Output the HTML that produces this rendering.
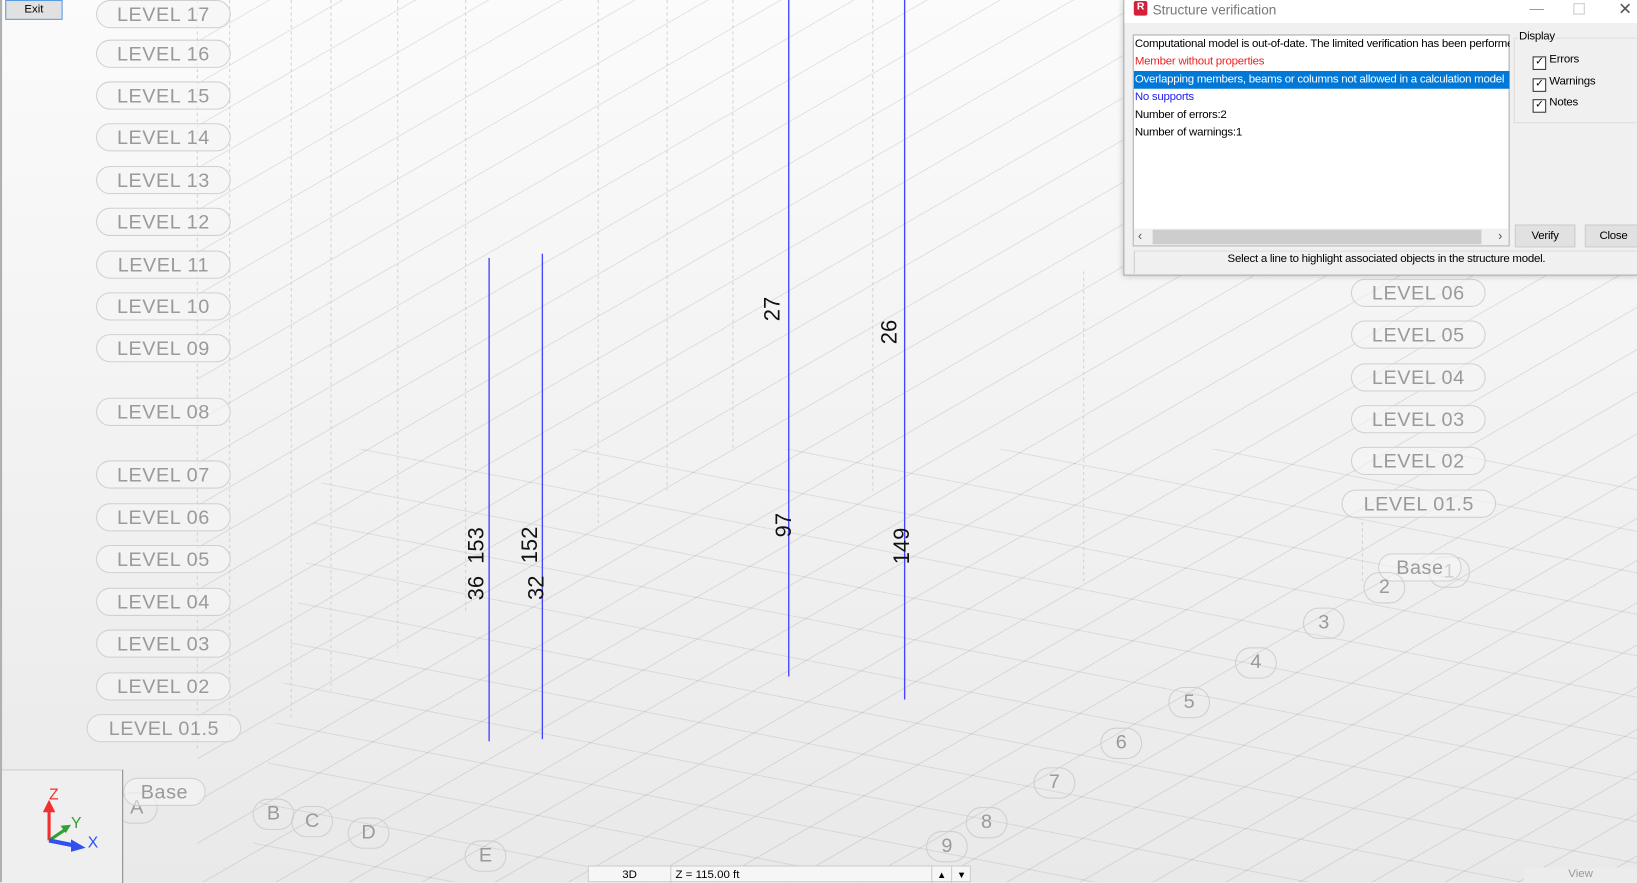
<!DOCTYPE html>
<html><head><meta charset="utf-8"><style>
html,body{margin:0;padding:0;width:1637px;height:882px;overflow:hidden;background:#eeeeee}
#w{position:absolute;left:0;top:0;width:1568px;height:845px;transform:scale(1.04401);transform-origin:0 0;background:linear-gradient(#fbfbfb,#e9e9e9);font-family:"Liberation Sans",sans-serif}
.p{position:absolute;height:27px;border:1px solid #d0d0d0;border-radius:14px;color:#9a9a9a;font-size:19px;line-height:27px;text-align:center;box-sizing:border-box;letter-spacing:.5px;background:rgba(245,245,245,.6)}
.c{position:absolute;width:40px;height:30px;border:1px solid #cfcfcf;border-radius:15px;color:#9a9a9a;font-size:19px;line-height:28px;text-align:center;box-sizing:border-box}
.n{position:absolute;font-size:21px;color:#111;transform:rotate(-90deg);transform-origin:center;white-space:nowrap}
.d{font-family:"Liberation Sans",sans-serif;font-size:11px;letter-spacing:-0.25px}
</style></head><body><div id="w">
<div style="position:absolute;left:189px;top:0;width:1379px;height:845px;background:repeating-linear-gradient(150deg,transparent 0 34px,rgba(0,0,0,.09) 34px 35px)"></div>
<div style="position:absolute;left:0;top:430px;width:1568px;height:415px;background:repeating-linear-gradient(191deg,transparent 0 38px,rgba(0,0,0,.08) 38px 39px);clip-path:polygon(15% 100%,20% 0,100% 0,100% 100%)"></div>
<svg width="1568" height="845" style="position:absolute;left:0;top:0">
<g stroke="#d2d2d2" stroke-width="1" stroke-dasharray="3,3" fill="none">
<line x1="189" y1="0" x2="189" y2="720"/>
<line x1="220" y1="0" x2="220" y2="700"/>
<line x1="279" y1="0" x2="279" y2="690"/>
<line x1="317" y1="0" x2="317" y2="662"/>
<line x1="381" y1="0" x2="381" y2="625"/>
<line x1="446" y1="0" x2="446" y2="588"/>
<line x1="573" y1="0" x2="573" y2="505"/>
<line x1="639" y1="0" x2="639" y2="470"/>
<line x1="702" y1="0" x2="702" y2="432"/>
<line x1="836" y1="0" x2="836" y2="470"/>
<line x1="1038" y1="260" x2="1038" y2="560"/>
<line x1="1305" y1="500" x2="1305" y2="560"/>
</g>
<g stroke="#4444ff" stroke-width="1.3">
<line x1="468.5" y1="247" x2="468.5" y2="710"/>
<line x1="519.5" y1="243" x2="519.5" y2="708"/>
<line x1="755.5" y1="0" x2="755.5" y2="648"/>
<line x1="866.5" y1="0" x2="866.5" y2="670"/>
</g>
</svg>
<div class="p" style="left:92px;top:0;width:129px">LEVEL 17</div>
<div class="p" style="left:92px;top:38px;width:129px">LEVEL 16</div>
<div class="p" style="left:92px;top:78px;width:129px">LEVEL 15</div>
<div class="p" style="left:92px;top:118px;width:129px">LEVEL 14</div>
<div class="p" style="left:92px;top:159px;width:129px">LEVEL 13</div>
<div class="p" style="left:92px;top:199px;width:129px">LEVEL 12</div>
<div class="p" style="left:92px;top:240px;width:129px">LEVEL 11</div>
<div class="p" style="left:92px;top:280px;width:129px">LEVEL 10</div>
<div class="p" style="left:92px;top:320px;width:129px">LEVEL 09</div>
<div class="p" style="left:92px;top:381px;width:129px">LEVEL 08</div>
<div class="p" style="left:92px;top:441px;width:129px">LEVEL 07</div>
<div class="p" style="left:92px;top:482px;width:129px">LEVEL 06</div>
<div class="p" style="left:92px;top:522px;width:129px">LEVEL 05</div>
<div class="p" style="left:92px;top:563px;width:129px">LEVEL 04</div>
<div class="p" style="left:92px;top:603px;width:129px">LEVEL 03</div>
<div class="p" style="left:92px;top:644px;width:129px">LEVEL 02</div>
<div class="p" style="left:83px;top:684px;width:148px">LEVEL 01.5</div>
<div class="p" style="left:1294px;top:267px;width:129px">LEVEL 06</div>
<div class="p" style="left:1294px;top:307px;width:129px">LEVEL 05</div>
<div class="p" style="left:1294px;top:348px;width:129px">LEVEL 04</div>
<div class="p" style="left:1294px;top:388px;width:129px">LEVEL 03</div>
<div class="p" style="left:1294px;top:428px;width:129px">LEVEL 02</div>
<div class="p" style="left:1285px;top:469px;width:148px">LEVEL 01.5</div>
<div class="c" style="left:1368px;top:533px">1</div>
<div class="p" style="left:1320px;top:530px;width:80px">Base</div>
<div class="c" style="left:1306px;top:548px">2</div>
<div class="c" style="left:1248px;top:582px">3</div>
<div class="c" style="left:1183px;top:620px">4</div>
<div class="c" style="left:1119px;top:658px">5</div>
<div class="c" style="left:1054px;top:697px">6</div>
<div class="c" style="left:990px;top:735px">7</div>
<div class="c" style="left:925px;top:773px">8</div>
<div class="c" style="left:887px;top:796px">9</div>
<div class="c" style="left:111px;top:759px">A</div>
<div class="p" style="left:118px;top:745px;width:79px;border-radius:14px">Base</div>
<div class="c" style="left:242px;top:765px">B</div>
<div class="c" style="left:279px;top:772px">C</div>
<div class="c" style="left:333px;top:783px">D</div>
<div class="c" style="left:445px;top:805px">E</div>
<div class="n" style="left:422px;top:528px">36&nbsp;&nbsp;153</div>
<div class="n" style="left:491px;top:510px">152</div>
<div class="n" style="left:503px;top:551px">32</div>
<div class="n" style="left:729px;top:284px">27</div>
<div class="n" style="left:740px;top:491px">97</div>
<div class="n" style="left:841px;top:306px">26</div>
<div class="n" style="left:847px;top:511px">149</div>
<div style="position:absolute;left:0;top:0;width:2px;height:845px;background:#b0b0b0"></div>
<div style="position:absolute;left:5px;top:0;width:55px;height:19px;background:#e1e1e1;border:1px solid #5b9be0;box-sizing:border-box;font-size:11px;text-align:center;line-height:17px">Exit</div>
<div style="position:absolute;left:2px;top:737px;width:115px;height:108px;border-top:1px solid #cfcfcf;border-right:1px solid #888;background:#efefef"></div>
<svg width="80" height="80" style="position:absolute;left:30px;top:750px">
<line x1="17" y1="55" x2="17" y2="25" stroke="#f03030" stroke-width="3"/><polygon points="11,28 17,16 23,28" fill="#f03030"/>
<line x1="17" y1="55" x2="32" y2="45" stroke="#30a030" stroke-width="3"/><polygon points="28,41 38,40 33,48" fill="#30a030"/>
<line x1="17" y1="55" x2="42" y2="60" stroke="#3050f0" stroke-width="4"/><polygon points="38,54 52,62 38,66" fill="#3050f0"/>
<text x="17" y="16" fill="#f03030" font-size="15" font-family="Liberation Sans">Z</text>
<text x="38" y="43" fill="#30a030" font-size="15" font-family="Liberation Sans">Y</text>
<text x="54" y="62" fill="#3050f0" font-size="15" font-family="Liberation Sans">X</text>
</svg>
<div style="position:absolute;left:563px;top:829px;width:367px;height:16px;background:#f6f6f6;border:1px solid #ccc;box-sizing:border-box;font-size:11px;line-height:16px">
<span style="position:absolute;left:32px">3D</span>
<span style="position:absolute;left:78px;border-left:1px solid #ccc;padding-left:4px">Z = 115.00 ft</span>
<span style="position:absolute;left:328px;border-left:1px solid #ccc;width:18px;text-align:center;font-size:9px">▲</span>
<span style="position:absolute;left:347px;border-left:1px solid #ccc;width:18px;text-align:center;font-size:9px">▼</span>
</div>
<div style="position:absolute;left:1460px;top:831px;width:108px;height:14px;background:#ececec;font-size:11px;color:#999;text-align:center">View</div>
<!-- dialog -->
<div class="d" style="position:absolute;left:1076px;top:0;width:492px;height:263px;background:#f0f0f0;border-left:1px solid #aaa;border-bottom:1px solid #aaa;box-shadow:0 0 6px rgba(0,0,0,.25)">
<div style="position:absolute;left:0;top:0;width:492px;height:22px;background:#fff">
<div style="position:absolute;left:9px;top:1px;width:13px;height:14px;background:#d4203a;color:#fff;font-size:10px;font-weight:bold;text-align:center;line-height:12px;border-radius:2px">R</div>
<span style="position:absolute;left:27px;top:2px;font-size:13px;color:#777;letter-spacing:0">Structure verification</span>
<span style="position:absolute;left:388px;top:0;font-size:14px;color:#999">—</span>
<span style="position:absolute;left:430px;top:3px;width:9px;height:9px;border:1px solid #ccc"></span>
<span style="position:absolute;left:473px;top:-1px;font-size:16px;color:#555">✕</span>
</div>
<div style="position:absolute;left:8px;top:33px;width:361px;height:203px;background:#fff;border:1px solid #aaa;box-sizing:border-box">
<div style="position:absolute;left:0;top:0;width:360px;white-space:nowrap;overflow:hidden;line-height:17px">
<div style="padding-left:1px">Computational model is out-of-date. The limited verification has been performed</div>
<div style="padding-left:1px;color:#f02020">Member without properties</div>
<div style="padding-left:1px;background:#0078d7;color:#fff">Overlapping members, beams or columns not allowed in a calculation model</div>
<div style="padding-left:1px;color:#2020f0">No supports</div>
<div style="padding-left:1px">Number of errors:2</div>
<div style="padding-left:1px">Number of warnings:1</div>
</div>
<div style="position:absolute;left:0;top:185px;width:359px;height:16px;background:#f0f0f0">
<span style="position:absolute;left:4px;top:0;font-size:12px;color:#555">‹</span>
<div style="position:absolute;left:18px;top:1px;width:315px;height:14px;background:#cdcdcd"></div>
<span style="position:absolute;left:349px;top:0;font-size:12px;color:#555">›</span>
</div></div>
<div style="position:absolute;left:373px;top:36px;width:119px;height:80px;border:1px solid #ddd;border-right:none"></div>
<span style="position:absolute;left:377px;top:29px;background:#f0f0f0;padding:0 1px">Display</span>
<div style="position:absolute;left:391px;top:47px;line-height:20.5px">
<div><span style="display:inline-block;width:11px;height:11px;border:1px solid #333;background:#fff;vertical-align:-2px;margin-right:3px;font-size:10px;line-height:10px;text-align:center">✓</span>Errors</div>
<div><span style="display:inline-block;width:11px;height:11px;border:1px solid #333;background:#fff;vertical-align:-2px;margin-right:3px;font-size:10px;line-height:10px;text-align:center">✓</span>Warnings</div>
<div><span style="display:inline-block;width:11px;height:11px;border:1px solid #333;background:#fff;vertical-align:-2px;margin-right:3px;font-size:10px;line-height:10px;text-align:center">✓</span>Notes</div>
</div>
<div style="position:absolute;left:374px;top:215px;width:58px;height:22px;background:#e1e1e1;border:1px solid #ccc;box-sizing:border-box;text-align:center;line-height:20px">Verify</div>
<div style="position:absolute;left:441px;top:215px;width:55px;height:22px;background:#e1e1e1;border:1px solid #ccc;box-sizing:border-box;text-align:center;line-height:20px">Close</div>
<div style="position:absolute;left:9px;top:240px;width:483px;height:22px;border-left:1px solid #ccc;border-top:1px solid #ddd;box-sizing:border-box;text-align:center;line-height:14px">Select a line to highlight associated objects in the structure model.</div>
</div>
</div></body></html>
